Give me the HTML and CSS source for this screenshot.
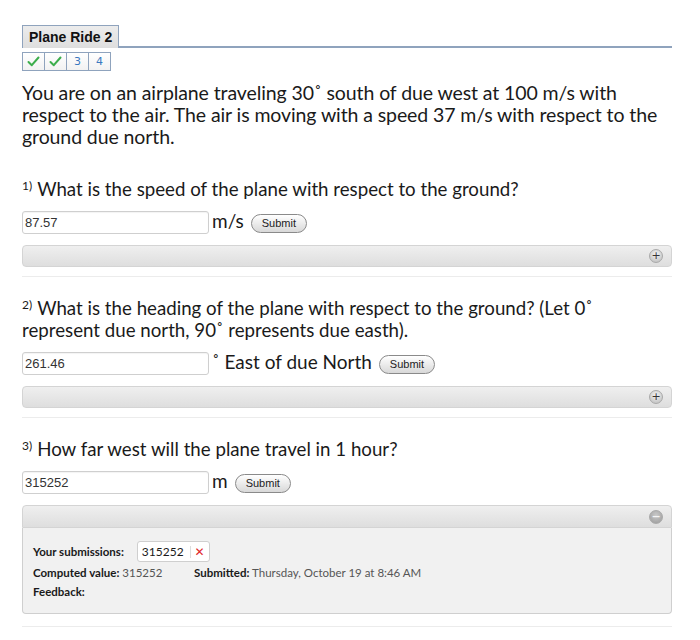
FILE: index.html
```html
<!DOCTYPE html>
<html>
<head>
<meta charset="utf-8">
<link rel="stylesheet" href="styles.css">
</head>
<body>
<div class="page">
  <div class="header">
    <div class="tab">Plane Ride 2</div>
    <div class="rule"></div>
  </div>
  <div class="nav">
    <span class="navbox"><svg width="13" height="11" viewBox="0 0 13 11"><path d="M1.5 6 L4.8 9.2 L11.5 1.5" fill="none" stroke="#3cae4c" stroke-width="2" stroke-linecap="round" stroke-linejoin="round"/></svg></span><span class="navbox"><svg width="13" height="11" viewBox="0 0 13 11"><path d="M1.5 6 L4.8 9.2 L11.5 1.5" fill="none" stroke="#3cae4c" stroke-width="2" stroke-linecap="round" stroke-linejoin="round"/></svg></span><span class="navbox num">3</span><span class="navbox num">4</span>
  </div>
  <p class="intro">You are on an airplane traveling 30˚ south of due west at 100 m/s with respect to the air. The air is moving with a speed 37 m/s with respect to the ground due north.</p>

  <div class="question">
    <p class="qtext"><span class="qnum">1)</span>What is the speed of the plane with respect to the ground?</p>
    <div class="answer">
      <span class="field">87.57</span><span class="unit">m/s</span><span class="submit">Submit</span>
    </div>
    <div class="bar"><span class="toggle">+</span></div>
    <div class="sep"></div>
  </div>

  <div class="question">
    <p class="qtext"><span class="qnum">2)</span>What is the heading of the plane with respect to the ground? (Let 0˚ represent due north, 90˚ represents due easth).</p>
    <div class="answer">
      <span class="field">261.46</span><span class="unit">˚ East of due North</span><span class="submit">Submit</span>
    </div>
    <div class="bar"><span class="toggle">+</span></div>
    <div class="sep"></div>
  </div>

  <div class="question">
    <p class="qtext"><span class="qnum">3)</span>How far west will the plane travel in 1 hour?</p>
    <div class="answer">
      <span class="field">315252</span><span class="unit">m</span><span class="submit">Submit</span>
    </div>
    <div class="panel">
      <div class="bar open"><span class="toggle">&#8722;</span></div>
      <div class="details">
        <div class="subrow"><b>Your submissions:</b><span class="subbox">315252<span class="pipe"></span><span class="cross">&#10005;</span></span></div>
        <div class="inforow"><span class="computed"><b>Computed value:</b> 315252</span><span><b>Submitted:</b> Thursday, October 19 at 8:46 AM</span></div>
        <div class="inforow"><b>Feedback:</b></div>
      </div>
    </div>
    <div class="sep"></div>
  </div>
</div>
</body>
</html>
```

FILE: styles.css
```css
html, body {
  margin: 0;
  padding: 0;
  background: #ffffff;
}
.page {
  width: 650px;
  padding: 25px 0 0 22px;
  font-family: Lato, "Open Sans", sans-serif;
  color: #1a1a1a;
}
.header {
  display: flex;
  align-items: flex-end;
}
.tab {
  height: 22px;
  line-height: 22px;
  padding: 0 6px;
  border: 1px solid #8fa3bd;
  border-bottom: none;
  background: linear-gradient(#ececec, #dedede);
  font-family: "Liberation Sans", Arial, sans-serif;
  font-weight: bold;
  font-size: 14px;
  color: #111;
}
.rule {
  flex: 1;
  border-bottom: 2px solid #8fa3bd;
}
.nav {
  display: flex;
  margin-top: 4px;
}
.navbox {
  width: 21px;
  height: 17px;
  border: 1px solid #8fa3bd;
  margin-right: -1px;
  background: linear-gradient(#ffffff, #f2f2f2);
  display: flex;
  align-items: center;
  justify-content: center;
  font-family: "DejaVu Sans", sans-serif;
  font-size: 11px;
}
.navbox.num {
  color: #3a78c0;
}
.intro {
  margin: 11px 0 0 0;
  font-size: 19.5px;
  line-height: 22px;
  width: 645px;
  letter-spacing: -0.1px;
}
.question {
  margin-top: 30px;
}
.question + .question {
  margin-top: 20px;
}
.qtext {
  margin: 0;
  font-size: 18.7px;
  line-height: 22px;
}
.qnum {
  display: inline-block;
  font-size: 12px;
  line-height: 16px;
  vertical-align: top;
  margin-right: 5px;
}
.answer {
  display: flex;
  align-items: center;
  margin-top: 11px;
  height: 23px;
}
.field {
  box-sizing: border-box;
  width: 187px;
  height: 23px;
  border: 1px solid #cfcfcf;
  border-radius: 3px;
  padding: 0 2px;
  display: flex;
  align-items: center;
  font-family: "Liberation Sans", Arial, sans-serif;
  font-size: 13px;
  color: #333;
  box-shadow: inset 0 1px 1px rgba(0,0,0,0.05);
}
.unit {
  font-size: 19px;
  margin-left: 3px;
  margin-right: 7px;
  line-height: 20px;
  align-self: flex-start;
}
.submit {
  box-sizing: border-box;
  height: 19px;
  padding: 0 10px;
  border: 1px solid #8a8a8a;
  border-radius: 10px;
  background: linear-gradient(#ffffff, #d8d8d8);
  font-family: "Liberation Sans", Arial, sans-serif;
  font-size: 11px;
  line-height: 17px;
  color: #222;
  margin-top: 2px;
}
.bar {
  box-sizing: border-box;
  margin-top: 11px;
  height: 22px;
  border: 1px solid #d4d4d4;
  border-radius: 4px;
  background: linear-gradient(#efefef, #dedede);
  display: flex;
  align-items: center;
  justify-content: flex-end;
  padding-right: 8px;
}
.toggle {
  width: 12px;
  height: 12px;
  border-radius: 50%;
  border: 1px solid #a9a9a9;
  background: radial-gradient(circle at 50% 35%, #f4f4f4, #b9b9b9);
  font-family: "DejaVu Sans", sans-serif;
  font-size: 11px;
  line-height: 12px;
  text-align: center;
  color: #333;
}
.bar.open .toggle {
  color: #f4f4f4;
  font-weight: bold;
  background: radial-gradient(circle at 50% 35%, #c8c8c8, #9a9a9a);
}
.sep {
  margin-top: 9px;
  border-top: 1px solid #ececec;
}
.panel {
  margin-top: 11px;
}
.panel .bar {
  margin-top: 0;
  border-radius: 4px 4px 0 0;
  height: 23px;
}
.panel + .sep {
  margin-top: 12px;
}
.details {
  box-sizing: border-box;
  height: 86px;
  border: 1px solid #cfcfcf;
  border-top: none;
  border-radius: 0 0 4px 4px;
  background: #f1f1f1;
  padding: 13px 0 0 10px;
  font-family: Lato, "Open Sans", sans-serif;
  font-size: 11.5px;
  color: #555;
}
.details b {
  color: #1a1a1a;
}
.subrow {
  display: flex;
  align-items: center;
  height: 21px;
}
.subbox {
  margin-left: 13px;
  height: 21px;
  box-sizing: border-box;
  border: 1px solid #cfcfcf;
  border-radius: 3px;
  background: #fff;
  padding: 0 4px;
  display: flex;
  align-items: center;
  color: #1a1a1a;
  font-size: 12px;
}
.pipe {
  width: 1px;
  height: 12px;
  background: #ddd;
  margin: 0 4px 0 6px;
}
.cross {
  color: #e0262a;
  font-family: "DejaVu Sans", sans-serif;
  font-weight: bold;
  font-size: 12px;
}
.inforow {
  margin-top: 3px;
  height: 16px;
  line-height: 16px;
  display: flex;
}
.computed {
  width: 161px;
}
```
